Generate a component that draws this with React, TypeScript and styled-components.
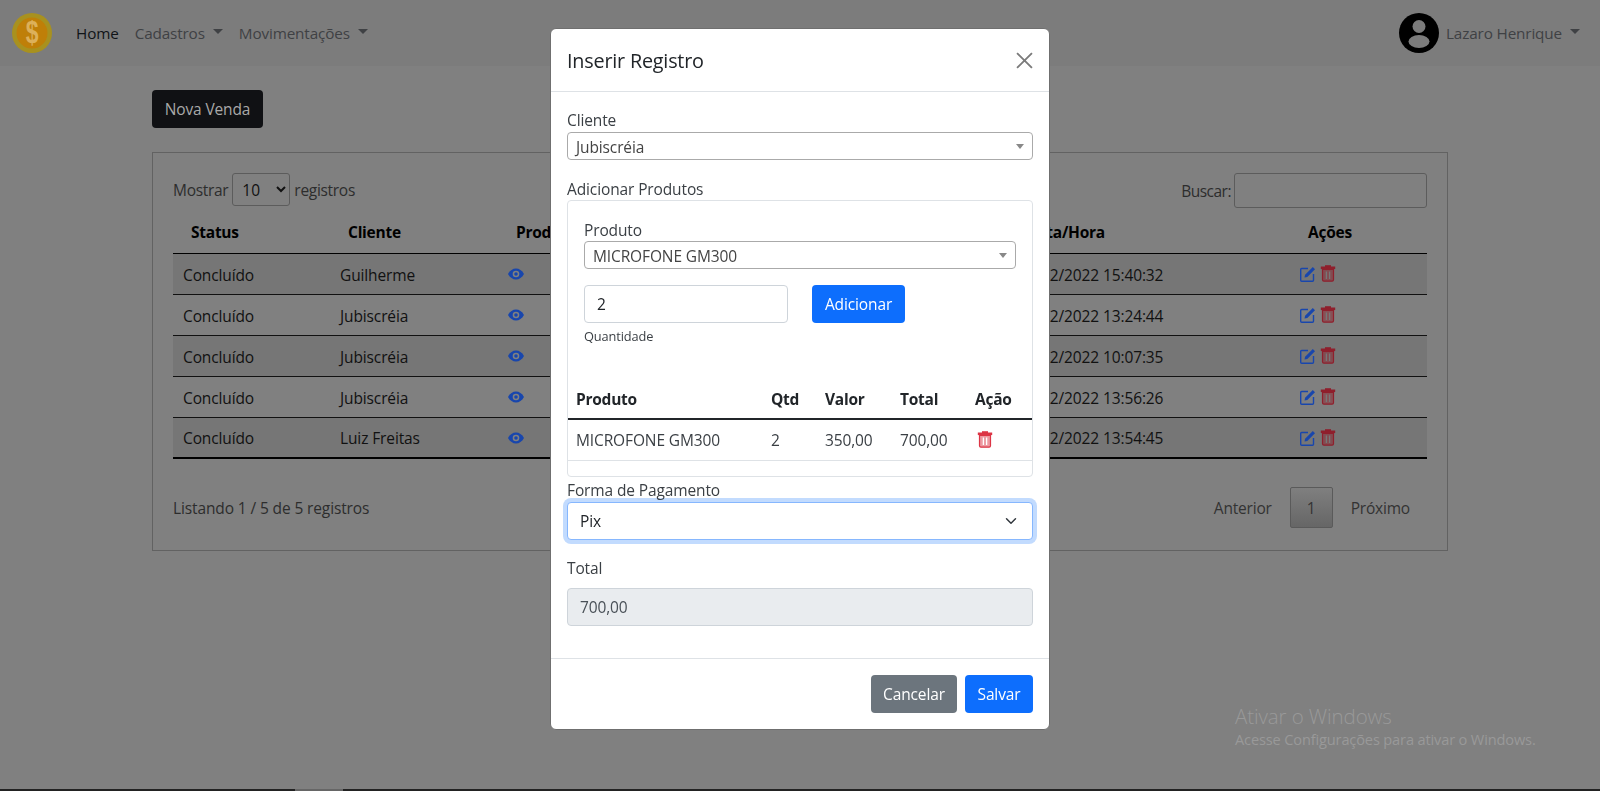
import React from "react";
import styled, { createGlobalStyle } from "styled-components";

const Global = createGlobalStyle`
  html, body { margin: 0; padding: 0; height: 100%; overflow: hidden; background: #808080; }
  body { font-family: "Open Sans", "Noto Sans", sans-serif; font-size: 15.5px; line-height: 24px; letter-spacing: -0.12px; color: #111; }
  * { box-sizing: border-box; }
`;

const Page = styled.div`height: 791px; position: relative; background: #808080; border-bottom: 2px solid #222;`;
const TaskThumb = styled.div`position: absolute; left: 295px; bottom: -2px; width: 48px; height: 2px; background: #666;`;
const Navbar = styled.nav`height: 66px; background: #7c7c7c; display: flex; align-items: center; padding: 0 12px 0 12px;`;
const LogoWrap = styled.svg`width: 40px; height: 40px; margin-right: 16px; flex: none;`;
const NavLink = styled.a<{ $active?: boolean }>`
  color: ${(p) => (p.$active ? "#101418" : "#3f4144")};
  margin: 0 8px; display: inline-flex; align-items: center; font-size: 15.3px; letter-spacing: -0.15px;
`;
const Caret = styled.span`
  display: inline-block; margin-left: 8px; margin-top: -3px; width: 0; height: 0;
  border-top: 5px solid currentColor; border-left: 5px solid transparent; border-right: 5px solid transparent;
`;
const Spacer = styled.div`flex: 1;`;
const Avatar = styled.svg`width: 40px; height: 40px; margin-right: -1px;`;
const Container = styled.main`width: 1296px; margin: 0 auto; padding-top: 24px;`;
const DarkButton = styled.button`
  height: 38px; width: 111px; background: #101114; color: #a9a9a9; border: 0; border-radius: 4px;
  font: inherit; letter-spacing: inherit; padding: 0;
`;
const Card = styled.section`margin-top: 24px; border: 1px solid #626262; padding: 20px; height: 399px;`;
const Toolbar = styled.div`display: flex; justify-content: space-between; align-items: flex-start; height: 36px;`;
const LengthLabel = styled.label`display: flex; align-items: center; gap: 4px; height: 33px; color: #2d2d2d; letter-spacing: -0.3px;`;
const LengthSelect = styled.select`
  width: 58px; height: 33px; background: #808080; border: 1px solid #5c5c5c; border-radius: 3px;
  font: inherit; color: #111; padding-left: 5px;
`;
const SearchLabel = styled.label`display: flex; align-items: center; gap: 3px; color: #2d2d2d; letter-spacing: -0.5px;`;
const SearchInput = styled.input`width: 193px; height: 35px; background: transparent; border: 1px solid #5c5c5c; border-radius: 3px;`;
const DataTable = styled.table`width: 100%; table-layout: fixed; border-collapse: separate; border-spacing: 0;`;
const Th = styled.th<{ $w: number }>`
  width: ${(p) => p.$w}px; height: 45px; padding: 1px 18px 0; text-align: left; font-weight: 700; color: #000;
  border-bottom: 1px solid #000; white-space: nowrap; overflow: hidden; letter-spacing: -0.25px;
`;
const Tr = styled.tr<{ $odd?: boolean }>`
  background: ${(p) => (p.$odd ? "#767676" : "transparent")};
`;
const Td = styled.td<{ $last?: boolean }>`
  height: 41px; padding: 1px 10px 0; color: #111; white-space: nowrap;
  border-bottom: ${(p) => (p.$last ? "2px solid #000" : "1px solid #111")};
`;
const IconCell = styled.span`display: inline-flex; align-items: center; gap: 4px; vertical-align: middle; margin-top: -4px; margin-left: -1px;`;
const ActionCell = styled(IconCell)`margin-left: 0;`;
const EyeIcon = styled.svg`width: 18px; height: 18px; display: block;`;
const EditIcon = styled.svg`width: 16px; height: 16px; display: block; color: #1846ad;`;
const TrashIcon = styled.svg<{ $modal?: boolean }>`
  width: 16px; height: 18px; display: block; color: ${(p) => (p.$modal ? "#dc3545" : "#8f1f2c")};
  margin-top: ${(p) => (p.$modal ? "-3px" : "-2px")};
  margin-left: ${(p) => (p.$modal ? "2px" : "0")};
`;
const CardFoot = styled.div`display: flex; justify-content: space-between; align-items: center; margin-top: 28px; padding-right: 17px;`;
const Info = styled.div`color: #2d2d2d;`;
const Pager = styled.div`display: flex; align-items: center; color: #333; letter-spacing: -0.2px;`;
const CurrentPage = styled.span`
  width: 43px; height: 41px; margin: 0 18px; display: flex; align-items: center; justify-content: center;
  border: 1px solid #5a5a5a; border-radius: 2px; background: linear-gradient(#7f7f7f, #666);
`;
const Watermark = styled.div`position: absolute; left: 1235px; top: 702px; color: #999; pointer-events: none;`;
const WmTitle = styled.div`font-size: 20.5px; line-height: 28px; letter-spacing: -0.1px; font-weight: 300;`;
const WmSub = styled.div`font-size: 14.6px; line-height: 18px; letter-spacing: -0.15px;`;

const Layer = styled.div`position: fixed; inset: 0; display: flex; justify-content: center; align-items: flex-start; padding-top: 28px;`;
const Modal = styled.div`width: 500px; height: 702px; background: #fff; border: 1px solid #6f6f6f; border-radius: 6px; color: #212529; overflow: hidden;`;
const ModalHeader = styled.header`
  height: 63px; border-bottom: 1px solid #dee2e6; padding: 2px 16px 0; display: flex; align-items: center; justify-content: space-between;
`;
const ModalTitle = styled.h5`margin: 0; font-size: 19.8px; font-weight: 500; letter-spacing: -0.2px; line-height: 24px;`;
const CloseIcon = styled.svg`width: 17px; height: 17px; display: block; color: #7b7b7b; margin-top: -2px;`;
const ModalBody = styled.div`padding: 16px 16px 0; height: 566px;`;
const FieldLabel = styled.label`display: block; height: 24px; color: #3a3f44;`;
const Select2 = styled.div`
  height: 28px; border: 1px solid #aaa; border-radius: 4px; display: flex; align-items: center; justify-content: space-between;
  padding: 2px 8px 0; color: #444; background: #fff;
`;
const Tri = styled.span`width: 0; height: 0; margin-top: -2px; border-top: 5px solid #888; border-left: 4px solid transparent; border-right: 4px solid transparent;`;
const SectionLabel = styled(FieldLabel)`margin-top: 16px; padding-top: 1px;`;
const ProductBox = styled.div`height: 277px; border: 1px solid #dee2e6; border-radius: 4px; padding-top: 16px;`;
const ProductForm = styled.div`padding: 0 16px;`;
const ProductLabel = styled(FieldLabel)`padding-top: 1px;`;
const QtyRow = styled.div`display: flex; gap: 24px; margin-top: 16px;`;
const QtyField = styled.div`width: 204px;`;
const TextInput = styled.input`
  width: 100%; height: 38px; border: 1px solid #ced4da; border-radius: 4px; padding: 0 12px;
  font: inherit; letter-spacing: inherit; color: #212529; background: #fff;
`;
const Hint = styled.div`font-size: 12.8px; line-height: 20px; margin-top: 3px; color: #3a3f44;`;
const PrimaryButton = styled.button<{ $w?: number }>`
  height: 38px; width: ${(p) => p.$w ?? 68}px; padding: 0; background: #0d6efd; color: #fff; border: 0; border-radius: 4px; font: inherit; letter-spacing: inherit;
`;
const SecondaryButton = styled(PrimaryButton)`background: #6c757d;`;
const ItemsTable = styled.table`width: 100%; table-layout: fixed; border-collapse: separate; border-spacing: 0; margin-top: 34px;`;
const ItemTh = styled.th<{ $w: number }>`
  width: ${(p) => p.$w}px; height: 40px; padding: 0 8px; text-align: left; font-weight: 700; color: #212529; border-bottom: 2px solid #212529; letter-spacing: -0.25px;
`;
const ItemTd = styled.td`height: 41px; padding: 0 8px; color: #3a3f44; border-bottom: 1px solid #dee2e6; white-space: nowrap;`;
const PayLabel = styled(FieldLabel)`margin-top: 1px;`;
const PaySelect = styled.select`
  display: block; width: 100%; height: 38px; appearance: none; border: 1px solid #86b7fe; border-radius: 4px;
  box-shadow: 0 0 0 4px #c2dbfe; outline: 0; padding: 0 12px; font: inherit; letter-spacing: inherit; color: #212529;
  background: #fff url("data:image/svg+xml,%3csvg xmlns='http://www.w3.org/2000/svg' viewBox='0 0 16 16'%3e%3cpath fill='none' stroke='%23343a40' stroke-linecap='round' stroke-linejoin='round' stroke-width='2' d='M2 5l6 6 6-6'/%3e%3c/svg%3e") no-repeat right 15px center / 12px 12px;
`;
const TotalLabel = styled(FieldLabel)`margin-top: 16px; margin-bottom: 8px;`;
const TotalInput = styled(TextInput)`background: #e9ecef; color: #495057; display: block;`;
const ModalFooter = styled.footer`
  height: 71px; border-top: 1px solid #dee2e6; padding: 16px; display: flex; justify-content: flex-end; gap: 8px;
`;

const Eye = () => (
  <EyeIcon viewBox="0 0 18 18">
    <path d="M1 9c2-3.6 4.8-5.5 8-5.5s6 1.900 8 5.500c-2 3.600-4.800 5.500-8 5.500S3 12.600 1 9z" fill="#1846ad" />
    <circle cx="9" cy="9" r="3.300" fill="#808080" />
    <circle cx="9" cy="9" r="1.800" fill="#1846ad" />
  </EyeIcon>
);
const Edit = () => (
  <EditIcon viewBox="0 0 16 16">
    <path d="M8 2.500H1.700a1 1 0 0 0-1 1v10.800a1 1 0 0 0 1 1h10.800a1 1 0 0 0 1-1V8" fill="none" stroke="currentColor" strokeWidth="1.400" />
    <path d="M4.500 11.500l.6-2.800L12.800 1l2.200 2.200-7.700 7.700z" fill="currentColor" />
  </EditIcon>
);
const Trash = ({ modal, bar }: { modal?: boolean; bar: string }) => (
  <TrashIcon $modal={modal} viewBox="0 0 16 18">
    <path d="M5 1.200h6v2H5z" fill="currentColor" />
    <path d="M.8 2.500h14.400v2.600H.8z" fill="currentColor" />
    <path d="M2.500 5.500h11v10.300a1.400 1.400 0 0 1-1.400 1.400H3.900a1.400 1.400 0 0 1-1.400-1.400z" fill="currentColor" fillOpacity=".5" stroke="currentColor" strokeWidth="1.200" />
    <path d="M6.400 7.500v7.500M9.600 7.500v7.500" stroke={bar} strokeWidth="1.300" fill="none" />
  </TrashIcon>
);

const rows = [
  ["Guilherme", "02/12/2022 15:40:32"],
  ["Jubiscréia", "02/12/2022 13:24:44"],
  ["Jubiscréia", "02/12/2022 10:07:35"],
  ["Jubiscréia", "02/12/2022 13:56:26"],
  ["Luiz Freitas", "02/12/2022 13:54:45"],
];

export default function App() {
  return (
    <>
      <Global />
      <Page>
        <Navbar>
          <LogoWrap viewBox="0 0 40 40">
            <circle cx="20" cy="20" r="20" fill="#a8911f" />
            <circle cx="20" cy="20" r="15.500" fill="#bf7f08" />
            <text transform="translate(20 30) scale(.82 1.1)" textAnchor="middle" fontSize="28" fontWeight="700" fontFamily="Liberation Sans, sans-serif" fill="#dcb05a">$</text>
          </LogoWrap>
          <NavLink $active>Home</NavLink>
          <NavLink>Cadastros<Caret /></NavLink>
          <NavLink>Movimentações<Caret /></NavLink>
          <Spacer />
          <Avatar viewBox="0 0 40 40">
            <circle cx="20" cy="20" r="20" fill="#000" />
            <circle cx="20" cy="13.500" r="6.500" fill="#7c7c7c" />
            <ellipse cx="20" cy="28.500" rx="10.500" ry="6.500" fill="#7c7c7c" />
          </Avatar>
          <NavLink>Lazaro Henrique<Caret /></NavLink>
        </Navbar>
        <Container>
          <DarkButton>Nova Venda</DarkButton>
          <Card>
            <Toolbar>
              <LengthLabel>
                Mostrar
                <LengthSelect defaultValue="10"><option>10</option><option>25</option></LengthSelect>
                registros
              </LengthLabel>
              <SearchLabel>Buscar:<SearchInput /></SearchLabel>
            </Toolbar>
            <DataTable>
              <thead>
                <tr>
                  <Th $w={157}>Status</Th>
                  <Th $w={168}>Cliente</Th>
                  <Th $w={510}>Produtos</Th>
                  <Th $w={282}>Data/Hora</Th>
                  <Th $w={137}>Ações</Th>
                </tr>
              </thead>
              <tbody>
                {rows.map(([client, date], i) => {
                  const last = i === rows.length - 1;
                  return (
                    <Tr key={i} $odd={i % 2 === 0}>
                      <Td $last={last}>Concluído</Td>
                      <Td $last={last}>{client}</Td>
                      <Td $last={last}><IconCell><Eye /></IconCell></Td>
                      <Td $last={last}>{date}</Td>
                      <Td $last={last}><ActionCell><Edit /><Trash bar="#777" /></ActionCell></Td>
                    </Tr>
                  );
                })}
              </tbody>
            </DataTable>
            <CardFoot>
              <Info>Listando 1 / 5 de 5 registros</Info>
              <Pager>Anterior<CurrentPage>1</CurrentPage>Próximo</Pager>
            </CardFoot>
          </Card>
        </Container>
        <Watermark>
          <WmTitle>Ativar o Windows</WmTitle>
          <WmSub>Acesse Configurações para ativar o Windows.</WmSub>
        </Watermark>
        <TaskThumb />
        <Layer>
          <Modal>
            <ModalHeader>
              <ModalTitle>Inserir Registro</ModalTitle>
              <CloseIcon viewBox="0 0 16 16"><path d="M1 1l14 14M15 1L1 15" stroke="currentColor" strokeWidth="1.800" fill="none" /></CloseIcon>
            </ModalHeader>
            <ModalBody>
              <FieldLabel>Cliente</FieldLabel>
              <Select2>Jubiscréia<Tri /></Select2>
              <SectionLabel>Adicionar Produtos</SectionLabel>
              <ProductBox>
                <ProductForm>
                  <ProductLabel>Produto</ProductLabel>
                  <Select2>MICROFONE GM300<Tri /></Select2>
                  <QtyRow>
                    <QtyField>
                      <TextInput defaultValue="2" />
                      <Hint>Quantidade</Hint>
                    </QtyField>
                    <PrimaryButton $w={93}>Adicionar</PrimaryButton>
                  </QtyRow>
                </ProductForm>
                <ItemsTable>
                  <thead>
                    <tr>
                      <ItemTh $w={195}>Produto</ItemTh>
                      <ItemTh $w={54}>Qtd</ItemTh>
                      <ItemTh $w={75}>Valor</ItemTh>
                      <ItemTh $w={75}>Total</ItemTh>
                      <ItemTh $w={65}>Ação</ItemTh>
                    </tr>
                  </thead>
                  <tbody>
                    <tr>
                      <ItemTd>MICROFONE GM300</ItemTd>
                      <ItemTd>2</ItemTd>
                      <ItemTd>350,00</ItemTd>
                      <ItemTd>700,00</ItemTd>
                      <ItemTd><Trash modal bar="#fff" /></ItemTd>
                    </tr>
                  </tbody>
                </ItemsTable>
              </ProductBox>
              <PayLabel>Forma de Pagamento</PayLabel>
              <PaySelect defaultValue="Pix"><option>Pix</option><option>Dinheiro</option></PaySelect>
              <TotalLabel>Total</TotalLabel>
              <TotalInput readOnly value="700,00" />
            </ModalBody>
            <ModalFooter>
              <SecondaryButton $w={86}>Cancelar</SecondaryButton>
              <PrimaryButton $w={68}>Salvar</PrimaryButton>
            </ModalFooter>
          </Modal>
        </Layer>
      </Page>
    </>
  );
}
